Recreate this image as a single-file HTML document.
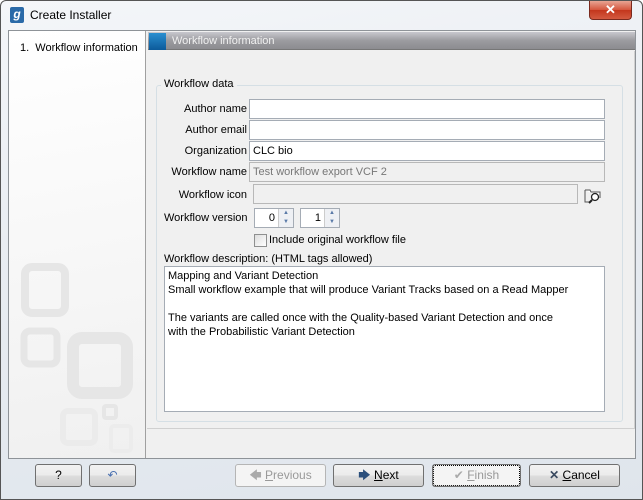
<!DOCTYPE html>
<html><head><style>
*{box-sizing:border-box;margin:0;padding:0}
body{width:643px;height:500px;overflow:hidden;font-family:"Liberation Sans",sans-serif;font-size:11px;color:#000;background:#fff}
.win{position:absolute;left:0;top:0;width:643px;height:500px;background:linear-gradient(170deg,#f4f6f9,#e9edf2 40%,#dfe5ec);border:1px solid #555;border-radius:6px 6px 0 0}
.abs{position:absolute}
.lbl{position:absolute;text-align:right;width:120px;font-size:11px}
.inp{position:absolute;background:#fff;border:1px solid #a5acb5;height:20px;padding:3px 3px;font-size:11px;line-height:13px}
.btn{position:absolute;top:463px;height:23px;border:1px solid #707070;border-radius:3px;background:linear-gradient(#f2f2f2,#ebebeb 50%,#dddddd 51%,#cfcfcf);text-align:center;line-height:21px;font-size:12px}
</style></head><body>
<div class="win">
<div class="abs" style="left:9px;top:6px;width:14px;height:16px;background:#2a6aa8;border-radius:2px;color:#fff;font-weight:bold;font-style:italic;font-size:12px;line-height:15px;text-align:center">g</div>
<div class="abs" style="left:29px;top:7px;font-size:12px">Create Installer</div>
<div class="abs" style="left:588px;top:0;width:43px;height:19px;border:1px solid #7a2a1e;border-top:none;border-radius:0 0 4px 4px;background:linear-gradient(#e8a493,#d5553c 50%,#c3361d 51%,#d45a40);color:#fff;font-weight:bold;text-align:center;line-height:18px;font-size:13px">✕</div>
<div class="abs" style="left:7px;top:29px;width:628px;height:429px;background:#f0f0f0;border:1px solid #8e9398"></div>
<div class="abs" style="left:8px;top:30px;width:137px;height:427px;background:linear-gradient(170deg,#fff,#f0f0f0);border-right:1px solid #a0a0a0;overflow:hidden">
<div class="abs" style="left:11px;top:11px;font-size:11px">1.&nbsp; Workflow information</div>
<svg class="abs" style="left:-8px;top:-30px" width="145" height="457"><g fill="none" stroke="#e6e6e6"><rect x="24" y="266" width="40" height="46" rx="7" stroke-width="8"/><rect x="23" y="330" width="33" height="33" rx="6" stroke-width="7"/><rect x="72" y="337" width="54" height="55" rx="9" stroke-width="12"/><rect x="62" y="410" width="32" height="32" rx="5" stroke-width="6" stroke="#ebebeb"/><rect x="103" y="405" width="12" height="12" rx="2" stroke-width="4"/><rect x="110" y="425" width="20" height="25" rx="3" stroke-width="4" stroke="#ececec"/></g></svg>
</div>
<div class="abs" style="left:147px;top:31px;width:487px;height:18px;background:linear-gradient(#c8c8ce,#9c9ca0 50%,#8c8c90);border-bottom:1px solid #777"></div>
<div class="abs" style="left:148px;top:32px;width:17px;height:17px;background:linear-gradient(#2a8fd0,#0c5a9a)"></div>
<div class="abs" style="left:171px;top:34px;color:#f0f0f0;font-size:11px">Workflow information</div>
<div class="abs" style="left:146px;top:50px;width:488px;height:378px;background:#f0f0f0;border-bottom:1px solid #d0d0d0;border-right:1px solid #d0d0d0"></div>
<div class="abs" style="left:155px;top:84px;width:467px;height:337px;border:1px solid #d5dfe5;border-radius:3px"></div>
<div class="abs" style="left:160px;top:77px;background:#f0f0f0;padding:0 3px">Workflow data</div>
<div class="lbl" style="left:126px;top:102px">Author name</div><div class="inp" style="left:248px;top:98px;width:356px"></div>
<div class="lbl" style="left:126px;top:123px">Author email</div><div class="inp" style="left:248px;top:119px;width:356px"></div>
<div class="lbl" style="left:126px;top:144px">Organization</div><div class="inp" style="left:248px;top:140px;width:356px">CLC bio</div>
<div class="lbl" style="left:126px;top:165px">Workflow name</div><div class="inp" style="left:248px;top:161px;width:356px;background:#f0f0f0;color:#777;border-color:#b8b8b8">Test workflow export VCF 2</div>
<div class="lbl" style="left:126px;top:188px">Workflow icon</div><div class="inp" style="left:252px;top:183px;width:325px;background:#f0f0f0;border-color:#b8b8b8"></div>
<svg class="abs" style="left:583px;top:185px" width="18" height="18"><path d="M1 4h5l1 2h9v6" fill="#fff" stroke="#555"/><path d="M1 4v12h6" fill="none" stroke="#555"/><circle cx="11" cy="11" r="3.5" fill="#fff" stroke="#222" stroke-width="1.3"/><path d="M8 14l-3 3" stroke="#222" stroke-width="2"/></svg>
<div class="abs" style="left:163px;top:211px">Workflow version</div>
<div class="inp" style="left:253px;top:207px;width:40px;text-align:right;padding-right:18px">0</div>
<div class="abs" style="left:277px;top:208px;width:15px;height:18px;border-left:1px solid #ccc;background:#eef0f4;font-size:6px;line-height:9px;color:#5a7aa8;text-align:center">▲<br>▼</div>
<div class="inp" style="left:299px;top:207px;width:40px;text-align:right;padding-right:18px">1</div>
<div class="abs" style="left:323px;top:208px;width:15px;height:18px;border-left:1px solid #ccc;background:#eef0f4;font-size:6px;line-height:9px;color:#5a7aa8;text-align:center">▲<br>▼</div>
<div class="abs" style="left:253px;top:233px;width:13px;height:13px;border:1px solid #8e8f8f;background:linear-gradient(135deg,#ddd,#fff)"></div>
<div class="abs" style="left:268px;top:233px">Include original workflow file</div>
<div class="abs" style="left:163px;top:252px">Workflow description: (HTML tags allowed)</div>
<div class="inp" style="left:163px;top:265px;width:441px;height:146px;line-height:14px;padding:2px 3px">Mapping and Variant Detection<br>Small workflow example that will produce Variant Tracks based on a Read Mapper<br><br>The variants are called once with the Quality-based Variant Detection and once<br>with the Probabilistic Variant Detection</div>
<div class="btn" style="left:34px;width:47px">?</div>
<div class="btn" style="left:88px;width:47px;color:#4a70b0">↶</div>
<div class="btn" style="left:234px;width:91px;color:#999;border-color:#b5b5b5;background:#f4f4f4"><span style="color:#aaa">🡄</span> <u>P</u>revious</div>
<div class="btn" style="left:332px;width:91px"><span style="color:#2b4f7c">🡆</span> <u>N</u>ext</div>
<div class="btn" style="left:431px;width:89px;color:#999;background:#f4f4f4;outline:1px dotted #000;outline-offset:-2px"><span style="color:#aaa">✔</span> <u>F</u>inish</div>
<div class="btn" style="left:528px;width:91px"><span style="color:#3a4a60;font-weight:bold">✕</span> <u>C</u>ancel</div>
</div>
</body></html>
